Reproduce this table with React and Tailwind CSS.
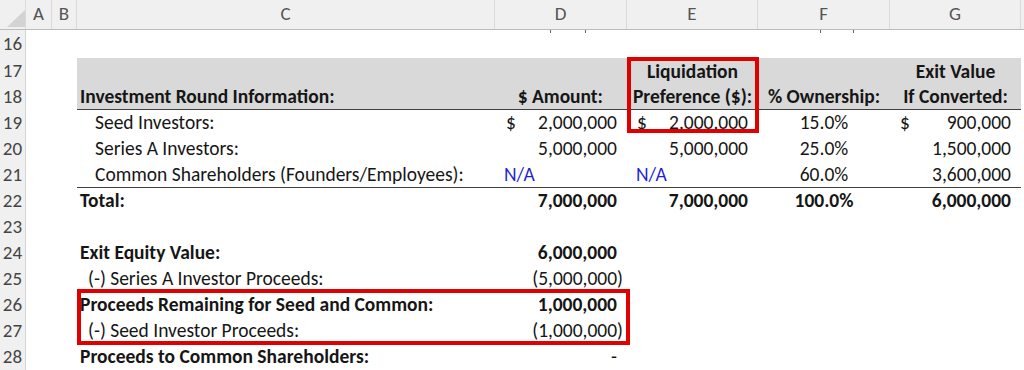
import React from 'react';

const FONT = { fontFamily: 'Carlito, Calibri, Lato, "Liberation Sans", sans-serif' };

const W = {
  c: 'w-[418px]',
  d: 'w-[132px]',
  e: 'w-[131px]',
  f: 'w-[132px]',
  g: 'w-[131px]',
};

const Row = ({ n, h = 'h-[26px]', className = '', children }) => (
  <div className={`flex ${h}`}>
    <div className="flex w-[26px] shrink-0 items-center justify-center border-r border-[#d4d4d4] bg-[#f0f0f0] text-[19px] text-[#444]">
      {n}
    </div>
    <div className="w-[51px] shrink-0" />
    <div className={`flex w-[944px] shrink-0 ${className}`}>{children}</div>
  </div>
);

const Money = ({ w, sign, value, bold, neg, pl = 'pl-[10px]' }) => (
  <div className={`flex ${w} items-center justify-between ${pl} ${neg ? 'pr-[4px]' : 'pr-[10px]'} ${bold ? 'font-bold' : ''}`}>
    <span>{sign ? '$' : ''}</span>
    <span>{value}</span>
  </div>
);

const Pct = ({ value, bold }) => (
  <div className={`flex ${W.f} items-center justify-center ${bold ? 'font-bold' : ''}`}>{value}</div>
);

const Label = ({ text, bold, indent = 'pl-[3px]' }) => (
  <div className={`flex ${W.c} items-center whitespace-nowrap ${indent} ${bold ? 'font-bold' : ''}`}>{text}</div>
);

const Empty = ({ w }) => <div className={w} />;

const NA = ({ w }) => (
  <div className={`flex ${w} items-center pl-[9px] text-[#1f1fd6]`}>N/A</div>
);

const ColHead = ({ w, label }) => (
  <div className={`flex ${w} items-center justify-center border-r border-[#dadada] text-[19px] text-[#555]`}>{label}</div>
);

export default function App() {
  return (
    <div className="relative h-[370px] w-[1024px] overflow-hidden bg-white text-[19.5px] text-[#161616]" style={FONT}>
      {/* column letters */}
      <div className="flex h-[30px] border-b border-[#bcbcbc] bg-[#f0f0f0]">
        <div className="relative w-[26px] shrink-0 border-r border-[#dadada]">
          <svg className="absolute left-[7px] top-[10px]" width="18" height="17" viewBox="0 0 18 17">
            <polygon points="18,0 18,17 0,17" fill="#d3d3d3" />
          </svg>
        </div>
        <ColHead w="w-[26px]" label="A" />
        <ColHead w="w-[25px]" label="B" />
        <ColHead w={W.c} label="C" />
        <ColHead w={W.d} label="D" />
        <ColHead w={W.e} label="E" />
        <ColHead w={W.f} label="F" />
        <ColHead w={W.g} label="G" />
        <div className="flex-1" />
      </div>

      <Row n="16" h="h-[28px]" />

      <Row n="17" className="bg-[#d9d9d9] font-bold">
        <Empty w={W.c} />
        <Empty w={W.d} />
        <div className={`flex ${W.e} items-center justify-center pt-[2px]`}>Liquidation</div>
        <Empty w={W.f} />
        <div className={`flex ${W.g} items-center justify-center pt-[2px]`}>Exit Value</div>
      </Row>

      <Row n="18" className="border-b border-[#404040] bg-[#d9d9d9] font-bold">
        <Label text="Investment Round Information:" bold />
        <div className={`flex ${W.d} items-center justify-end pr-[24px]`}>$ Amount:</div>
        <div className={`flex ${W.e} items-center justify-center whitespace-nowrap`}>Preference ($):</div>
        <div className={`flex ${W.f} items-center justify-center whitespace-nowrap`}>% Ownership:</div>
        <div className={`flex ${W.g} items-center justify-center whitespace-nowrap`}>If Converted:</div>
      </Row>

      <Row n="19">
        <Label text="Seed Investors:" indent="pl-[18px]" />
        <Money w={W.d} sign value="2,000,000" pl="pl-[11px]" />
        <Money w={W.e} sign value="2,000,000" />
        <Pct value="15.0%" />
        <Money w={W.g} sign value="900,000" />
      </Row>

      <Row n="20">
        <Label text="Series A Investors:" indent="pl-[18px]" />
        <Money w={W.d} value="5,000,000" />
        <Money w={W.e} value="5,000,000" />
        <Pct value="25.0%" />
        <Money w={W.g} value="1,500,000" />
      </Row>

      <Row n="21" className="border-b border-[#404040]">
        <Label text="Common Shareholders (Founders/Employees):" indent="pl-[18px]" />
        <NA w={W.d} />
        <NA w={W.e} />
        <Pct value="60.0%" />
        <Money w={W.g} value="3,600,000" />
      </Row>

      <Row n="22">
        <Label text="Total:" bold />
        <Money w={W.d} value="7,000,000" bold />
        <Money w={W.e} value="7,000,000" bold />
        <Pct value="100.0%" bold />
        <Money w={W.g} value="6,000,000" bold />
      </Row>

      <Row n="23" />

      <Row n="24">
        <Label text="Exit Equity Value:" bold />
        <Money w={W.d} value="6,000,000" bold />
      </Row>

      <Row n="25">
        <Label text="(-) Series A Investor Proceeds:" indent="pl-[11px]" />
        <Money w={W.d} value="(5,000,000)" neg />
      </Row>

      <Row n="26">
        <Label text="Proceeds Remaining for Seed and Common:" bold />
        <Money w={W.d} value="1,000,000" bold />
      </Row>

      <Row n="27">
        <Label text="(-) Seed Investor Proceeds:" indent="pl-[11px]" />
        <Money w={W.d} value="(1,000,000)" neg />
      </Row>

      <Row n="28">
        <Label text="Proceeds to Common Shareholders:" bold />
        <Money w={W.d} value="-" />
      </Row>

      {/* clipped marks from row 15 */}
      <span className="absolute left-[550px] top-[30px] h-[3px] w-[1px] bg-[#666]" />
      <span className="absolute left-[585px] top-[30px] h-[3px] w-[1px] bg-[#666]" />
      <span className="absolute left-[820px] top-[30px] h-[3px] w-[1px] bg-[#666]" />
      <span className="absolute left-[853px] top-[30px] h-[3px] w-[1px] bg-[#666]" />

      {/* highlight boxes */}
      <div className="absolute left-[627px] top-[57px] h-[76px] w-[132px] border-[4px] border-[#e00000]" />
      <div className="absolute left-[77px] top-[289px] h-[56px] w-[553px] border-[4px] border-[#e00000]" />
    </div>
  );
}
